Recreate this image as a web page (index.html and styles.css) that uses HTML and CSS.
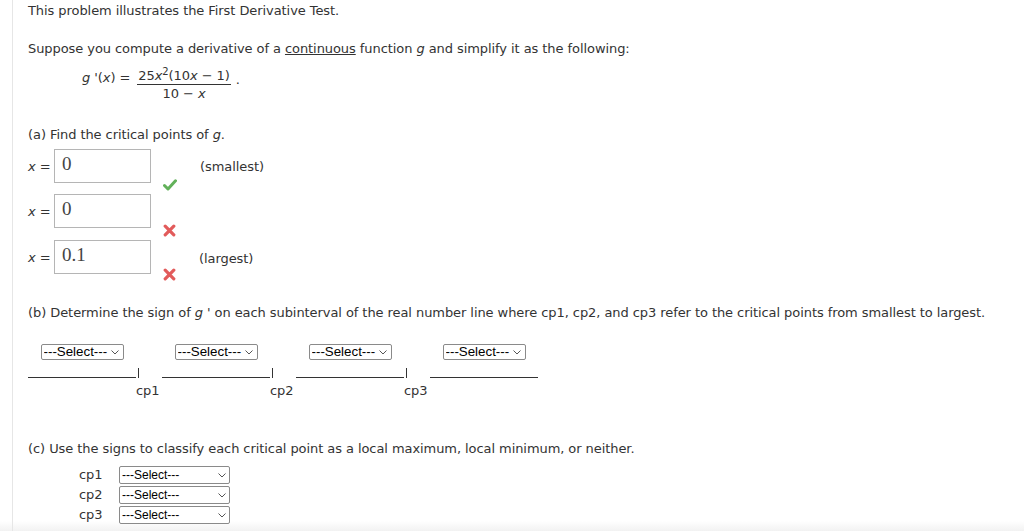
FILE: index.html
```html
<!DOCTYPE html>
<html>
<head>
<meta charset="utf-8">
<link rel="stylesheet" href="styles.css">
</head>
<body>
<div class="page">
  <p class="intro">This problem illustrates the First Derivative Test.</p>
  <p class="suppose">Suppose you compute a derivative of a <span class="u">continuous</span> function <i>g</i> and simplify it as the following:</p>
  <div class="formula">
    <span class="lhs"><i>g</i> '(<i>x</i>) =</span>
    <span class="frac">
      <span class="num">25<i>x</i><sup>2</sup>(10<i>x</i> &minus; 1)</span>
      <span class="den">10 &minus; <i>x</i></span>
    </span>
    <span class="dot">.</span>
  </div>

  <p class="part-a">(a) Find the critical points of <i>g</i>.</p>
  <div class="cp-row">
    <span class="xlabel"><i>x</i> =</span>
    <div class="answer">0</div>
    <span class="mark">
      <svg width="14" height="12" viewBox="0 0 14 12"><path d="M1.5 6.5 L5 10 L12.5 1.8" fill="none" stroke="#62b15a" stroke-width="3" stroke-linejoin="round" stroke-linecap="round"/></svg>
    </span>
    <span class="hint">(smallest)</span>
  </div>
  <div class="cp-row row2">
    <span class="xlabel"><i>x</i> =</span>
    <div class="answer">0</div>
    <span class="mark">
      <svg width="13" height="13" viewBox="0 0 13 13"><path d="M2.2 2.2 L10.8 10.8 M10.8 2.2 L2.2 10.8" fill="none" stroke="#e25b5b" stroke-width="3.2" stroke-linecap="round"/></svg>
    </span>
    <span class="hint"></span>
  </div>
  <div class="cp-row row3">
    <span class="xlabel"><i>x</i> =</span>
    <div class="answer">0.1</div>
    <span class="mark mark-low">
      <svg width="13" height="13" viewBox="0 0 13 13"><path d="M2.2 2.2 L10.8 10.8 M10.8 2.2 L2.2 10.8" fill="none" stroke="#e25b5b" stroke-width="3.2" stroke-linecap="round"/></svg>
    </span>
    <span class="hint hint-l">(largest)</span>
  </div>

  <p class="part-b">(b) Determine the sign of <i>g</i> ' on each subinterval of the real number line where cp1, cp2, and cp3 refer to the critical points from smallest to largest.</p>
  <div class="numline">
    <div class="seg">
      <span class="selwrap"><select class="sel"><option>---Select---</option></select><svg class="chev" width="8" height="5" viewBox="0 0 8 5"><path d="M0.5 0.5 L4 4 L7.5 0.5" fill="none" stroke="#555" stroke-width="1"/></svg></span>
      <div class="line"></div>
    </div>
    <div class="tick"><span class="pipe"></span><span class="cp">cp1</span></div>
    <div class="seg">
      <span class="selwrap"><select class="sel"><option>---Select---</option></select><svg class="chev" width="8" height="5" viewBox="0 0 8 5"><path d="M0.5 0.5 L4 4 L7.5 0.5" fill="none" stroke="#555" stroke-width="1"/></svg></span>
      <div class="line"></div>
    </div>
    <div class="tick"><span class="pipe"></span><span class="cp">cp2</span></div>
    <div class="seg">
      <span class="selwrap"><select class="sel"><option>---Select---</option></select><svg class="chev" width="8" height="5" viewBox="0 0 8 5"><path d="M0.5 0.5 L4 4 L7.5 0.5" fill="none" stroke="#555" stroke-width="1"/></svg></span>
      <div class="line"></div>
    </div>
    <div class="tick"><span class="pipe"></span><span class="cp">cp3</span></div>
    <div class="seg">
      <span class="selwrap"><select class="sel"><option>---Select---</option></select><svg class="chev" width="8" height="5" viewBox="0 0 8 5"><path d="M0.5 0.5 L4 4 L7.5 0.5" fill="none" stroke="#555" stroke-width="1"/></svg></span>
      <div class="line"></div>
    </div>
  </div>

  <p class="part-c">(c) Use the signs to classify each critical point as a local maximum, local minimum, or neither.</p>
  <div class="classify">
    <div class="c-row"><span class="c-label">cp1</span><span class="selwrap"><select class="sel wide"><option>---Select---</option></select><svg class="chev" width="8" height="5" viewBox="0 0 8 5"><path d="M0.5 0.5 L4 4 L7.5 0.5" fill="none" stroke="#555" stroke-width="1"/></svg></span></div>
    <div class="c-row"><span class="c-label">cp2</span><span class="selwrap"><select class="sel wide"><option>---Select---</option></select><svg class="chev" width="8" height="5" viewBox="0 0 8 5"><path d="M0.5 0.5 L4 4 L7.5 0.5" fill="none" stroke="#555" stroke-width="1"/></svg></span></div>
    <div class="c-row"><span class="c-label">cp3</span><span class="selwrap"><select class="sel wide"><option>---Select---</option></select><svg class="chev" width="8" height="5" viewBox="0 0 8 5"><path d="M0.5 0.5 L4 4 L7.5 0.5" fill="none" stroke="#555" stroke-width="1"/></svg></span></div>
  </div>
</div>
</body>
</html>
```

FILE: styles.css
```css
html {
  background: linear-gradient(to bottom, #ffffff 0, #ffffff 521px, #f2f2f2 531px) no-repeat;
  background-color: #f2f2f2;
  min-height: 100%;
}
body {
  margin: 0;
  font-family: "DejaVu Sans", Verdana, sans-serif;
  font-size: 13px;
  line-height: 16px;
  letter-spacing: -0.07px;
  color: #333333;
}
.page {
  margin-left: 12px;
  border-left: 1px solid #e6e6e6;
  padding: 3px 0 0 15px;
  min-height: 528px;
}
p { margin: 0; }
.u { text-decoration: underline; }
.suppose { margin-top: 22px; }

.formula {
  display: flex;
  align-items: flex-start;
  margin-top: 11px;
  padding-left: 54px;
  height: 34px;
}
.lhs { margin-top: 2px; }
.frac {
  display: flex;
  flex-direction: column;
  align-items: center;
  margin-left: 7px;
}
.num {
  border-bottom: 1px solid #333;
  padding: 0 1px;
  line-height: 16px;
}
.num sup { font-size: 10px; line-height: 0; vertical-align: 5px; }
.den { line-height: 16px; padding-top: 1px; }
.dot { margin-left: 5px; margin-top: 4px; }

.part-a { margin-top: 25px; }
.cp-row {
  display: flex;
  align-items: flex-start;
  height: 34px;
  margin-top: 6px;
}
.row2 { margin-top: 11px; }
.row3 { margin-top: 12px; }
.xlabel { width: 26px; margin-top: 10px; }
.answer {
  box-sizing: border-box;
  width: 97px;
  height: 34px;
  border: 1px solid #b5b5b5;
  padding: 3px 0 0 7px;
  font-family: "Liberation Serif", "Times New Roman", serif;
  font-size: 19px;
  line-height: 22px;
  letter-spacing: 0;
  color: #444;
}
.mark { width: 49px; padding-left: 12px; box-sizing: border-box; margin-top: 30px; }
.mark-low { margin-top: 28px; }
.hint { margin-top: 10px; }
.hint-l { margin-left: -1px; margin-top: 11px; }

.part-b { margin-top: 31px; }
.numline {
  display: flex;
  align-items: flex-start;
  margin-top: 23px;
}
.seg {
  width: 108px;
  display: flex;
  flex-direction: column;
  align-items: center;
}
.seg .line {
  align-self: stretch;
  height: 17px;
  border-bottom: 1px solid #333;
}
.tick {
  width: 26px;
  display: flex;
  flex-direction: column;
  align-items: flex-start;
  padding-top: 24px;
}
.pipe {
  display: block;
  width: 0;
  height: 10px;
  margin-left: 2px;
  border-left: 1px solid #333;
}
.cp { margin-top: 5px; }

.selwrap {
  position: relative;
  display: inline-block;
  line-height: 0;
}
.sel {
  -webkit-appearance: none;
  appearance: none;
  box-sizing: border-box;
  font-family: "Liberation Sans", Arial, sans-serif;
  font-size: 13.33px;
  letter-spacing: 0;
  width: 83px;
  height: 16px;
  line-height: 14px;
  padding: 0 0 0 2px;
  color: #000;
  border: 1px solid #8a8a8a;
  border-radius: 2px;
  background: #fff;
  margin: 0;
}
.chev {
  position: absolute;
  right: 5px;
  top: 6px;
  pointer-events: none;
}
.sel.wide { width: 111px; height: 18px; font-size: 12px; line-height: 16px; }
.wide + .chev { top: 7px; right: 4px; }

.part-c { margin-top: 42px; }
.classify { margin-top: 8px; padding-left: 51px; }
.c-row { display: flex; align-items: center; height: 20px; }
.c-label { width: 40px; }
```
